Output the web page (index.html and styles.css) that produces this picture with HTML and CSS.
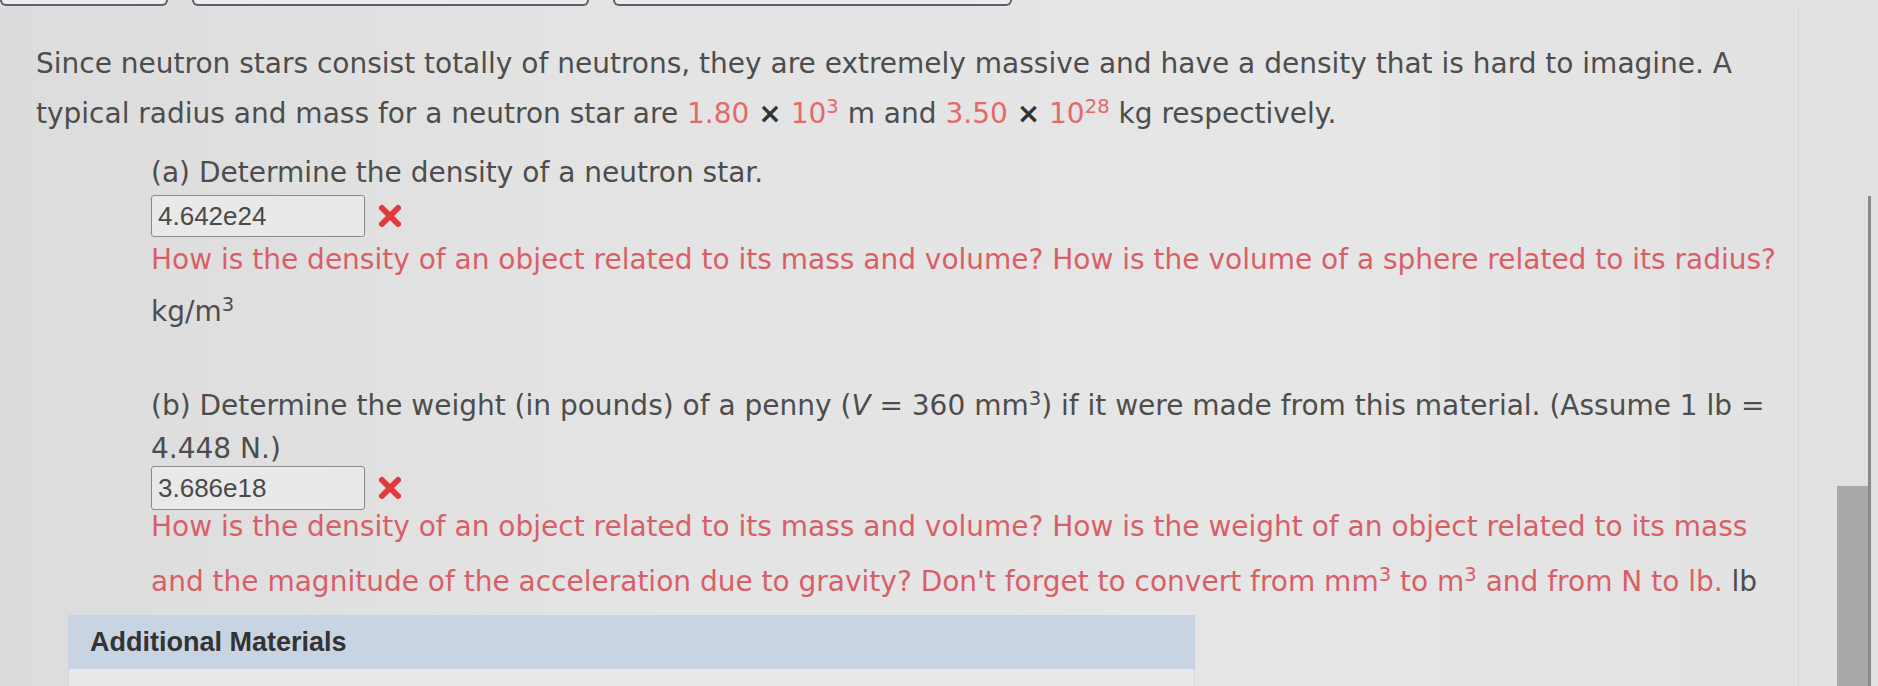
FILE: index.html
```html
<!DOCTYPE html>
<html lang="en">
<head>
<meta charset="utf-8">
<title>Neutron star density</title>
<link rel="stylesheet" href="styles.css">
</head>
<body>
<div class="tabs">
  <div class="tab t1"></div>
  <div class="tab t2"></div>
  <div class="tab t3"></div>
</div>
<div class="main">
  <div class="content">
    <p class="intro">Since neutron stars consist totally of neutrons, they are extremely massive and have a density that is hard to imagine. A<br>typical radius and mass for a neutron star are <span class="num">1.80</span> <span class="times">×</span> <span class="num">10<sup>3</sup></span> m and <span class="num">3.50</span> <span class="times">×</span> <span class="num">10<sup>28</sup></span> kg respectively.</p>

    <div class="part part-a">
      <div class="line">(a) Determine the density of a neutron star.</div>
      <div class="answer">
        <div class="field">4.642e24</div>
        <svg class="wrong" width="26" height="26" viewBox="0 0 26 26"><path d="M5 5 L21 21 M21 5 L5 21" stroke="#e0393e" stroke-width="6" stroke-linecap="round"/></svg>
      </div>
      <div class="line hint">How is the density of an object related to its mass and volume? How is the volume of a sphere related to its radius?</div>
      <div class="line unit">kg/m<sup>3</sup></div>
    </div>

    <div class="part part-b">
      <div class="line">(b) Determine the weight (in pounds) of a penny (<i>V</i> = 360 mm<sup>3</sup>) if it were made from this material. (Assume 1 lb =<br>4.448 N.)</div>
      <div class="answer">
        <div class="field">3.686e18</div>
        <svg class="wrong" width="26" height="26" viewBox="0 0 26 26"><path d="M5 5 L21 21 M21 5 L5 21" stroke="#e0393e" stroke-width="6" stroke-linecap="round"/></svg>
      </div>
      <div class="line hint hint-b1">How is the density of an object related to its mass and volume? How is the weight of an object related to its mass</div>
      <div class="line hint-b2"><span class="hint">and the magnitude of the acceleration due to gravity? Don't forget to convert from mm<sup>3</sup> to m<sup>3</sup> and from N to lb.</span> lb</div>
    </div>

    <div class="materials">
      <div class="materials-head">Additional Materials</div>
      <div class="materials-body"></div>
    </div>
  </div>
  <div class="gutter"></div>
  <div class="scroll">
    <div class="thumb"></div>
  </div>
  <div class="edge"></div>
</div>
</body>
</html>
```
FILE: styles.css
```css
html, body {
  margin: 0;
  padding: 0;
}
body {
  width: 1878px;
  height: 686px;
  overflow: hidden;
  background: linear-gradient(90deg, #dcdcdc 0%, #e3e3e3 30%, #e6e6e6 70%, #e1e1e1 100%);
  font-family: "DejaVu Sans", Verdana, sans-serif;
  color: #4d4d4d;
}
.tabs {
  display: flex;
  height: 6px;
}
.tab {
  box-sizing: border-box;
  height: 6px;
  border: 2px solid #55626f;
  border-top: none;
  border-radius: 0 0 6px 6px;
  background: #ececec;
}
.t1 { width: 168px; }
.t2 { width: 397px; margin-left: 24px; }
.t3 { width: 399px; margin-left: 24px; }

.main {
  display: flex;
  height: 680px;
}
.content {
  box-sizing: border-box;
  width: 1799px;
  padding: 36px 0 0 36px;
  border-right: 1px solid #d4d4d4;
  white-space: nowrap;
}
.intro {
  margin: 0;
  font-size: 28px;
  line-height: 43px;
}
.num { color: #e36a6a; }
.times { color: #333; font-weight: bold; }
sup { font-size: 0.7em; }

.part {
  margin-left: 115px;
  font-size: 28px;
  line-height: 43px;
}
.part-a { margin-top: 16px; }
.part-b { margin-top: 43px; }
.unit { margin-top: 2px; }
.hint { color: #d85f68; }
.answer {
  display: flex;
  align-items: center;
  height: 44px;
}
.part-b .answer { margin-top: -4px; }
.field {
  box-sizing: border-box;
  width: 214px;
  height: 42px;
  border: 1px solid #8a8a8a;
  border-radius: 3px;
  background: #e9e9e9;
  font-family: "Liberation Sans", Arial, sans-serif;
  font-size: 26px;
  line-height: 40px;
  padding-left: 6px;
  color: #4a4a4a;
}
.part-b .field {
  height: 44px;
  line-height: 42px;
}
.hint-b1 { margin-top: -5px; }
.hint-b2 { margin-top: 5px; }
.wrong {
  margin-left: 12px;
}
.materials {
  margin: 12px 0 0 32px;
  width: 1127px;
}
.materials-head {
  height: 54px;
  background: #c8d4e2;
  font-family: "Liberation Sans", Arial, sans-serif;
  font-weight: bold;
  font-size: 27px;
  line-height: 54px;
  padding-left: 22px;
  color: #333;
}
.materials-body {
  height: 30px;
  background: #e9e9e9;
  border-left: 1px solid #d6d6d6;
  border-right: 1px solid #d6d6d6;
}
.gutter {
  width: 38px;
}
.scroll {
  width: 31px;
  padding-top: 480px;
}
.thumb {
  height: 200px;
  background: #a9a9a9;
}
.edge {
  width: 3px;
  margin-top: 190px;
  background: #8a8a8a;
}
```
